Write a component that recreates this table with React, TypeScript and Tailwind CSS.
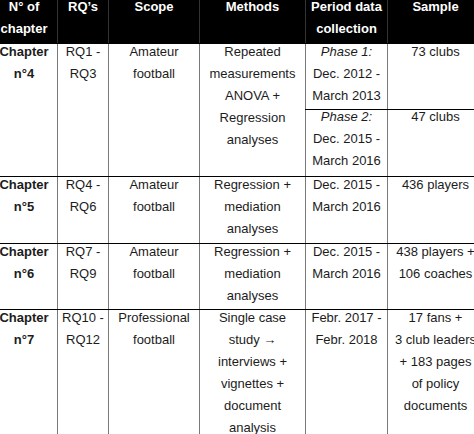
import React from "react";

const V = "border-l border-[#7a7a7a]";
const VH = "border-l border-[#333]";

function Lines({ lines, bold, className = "" }: { lines: React.ReactNode[]; bold?: boolean; className?: string }) {
  return (
    <div className={`-mt-[3px] flex flex-col items-center ${bold ? "font-bold" : ""} ${className}`}>
      {lines.map((l, i) => (
        <div key={i} className="whitespace-nowrap">{l}</div>
      ))}
    </div>
  );
}

type Row = {
  h: string;
  ch: string;
  rq: string[];
  scope: string[];
  methods: string[];
  period: React.ReactNode[];
  sample: string[];
};

const rows: Row[] = [
  {
    h: "h-[67px]",
    ch: "n°5",
    rq: ["RQ4 -", "RQ6"],
    scope: ["Amateur", "football"],
    methods: ["Regression +", "mediation", "analyses"],
    period: ["Dec. 2015 -", "March 2016"],
    sample: ["436 players"],
  },
  {
    h: "h-[66px]",
    ch: "n°6",
    rq: ["RQ7 -", "RQ9"],
    scope: ["Amateur", "football"],
    methods: ["Regression +", "mediation", "analyses"],
    period: ["Dec. 2015 -", "March 2016"],
    sample: ["438 players +", "106 coaches"],
  },
  {
    h: "h-[130px]",
    ch: "n°7",
    rq: ["RQ10 -", "RQ12"],
    scope: ["Professional", "football"],
    methods: ["Single case", "study →", "interviews +", "vignettes +", "document", "analysis"],
    period: ["Febr. 2017 -", "Febr. 2018"],
    sample: ["17 fans +", "3 club leaders", "+ 183 pages", "of policy", "documents"],
  },
];

const cols = "grid grid-cols-[57px_51px_91px_106px_82px_96px]";

export default function App() {
  return (
    <div
      className="w-[474px] h-[434px] overflow-hidden bg-white text-[13px] leading-[22px] text-[#1c1c1c]"
      style={{ fontFamily: '"Liberation Sans", Arial, sans-serif' }}
    >
      <div className="w-[483px]">
        {/* header */}
        <div className={`${cols} h-[43px] bg-black text-white font-bold`}>
          <div className="pr-[9px]">
            <div className="-mt-[4px] flex flex-col items-center">
              <div className="whitespace-nowrap">N° of</div>
              <div className="whitespace-nowrap">chapter</div>
            </div>
          </div>
          <div className={VH}>
            <div className="-mt-[4px] text-center">RQ’s</div>
          </div>
          <div className={VH}>
            <div className="-mt-[4px] text-center">Scope</div>
          </div>
          <div className={VH}>
            <div className="-mt-[4px] text-center">Methods</div>
          </div>
          <div className={VH}>
            <div className="-mt-[4px] flex flex-col items-center">
              <div className="whitespace-nowrap">Period data</div>
              <div className="whitespace-nowrap">collection</div>
            </div>
          </div>
          <div className={VH}>
            <div className="-mt-[4px] text-center">Sample</div>
          </div>
        </div>

        {/* row 1 */}
        <div className={`${cols} h-[133px] border-t border-black`}>
          <div className="pr-[9px]">
            <Lines bold lines={["Chapter", "n°4"]} />
          </div>
          <div className={V}>
            <Lines lines={["RQ1 -", "RQ3"]} />
          </div>
          <div className={V}>
            <Lines lines={["Amateur", "football"]} />
          </div>
          <div className={V}>
            <Lines lines={["Repeated", "measurements", "ANOVA +", "Regression", "analyses"]} />
          </div>
          <div className="col-span-2 flex flex-col">
            <div className="grid grid-cols-[82px_96px] h-[65px]">
              <div className={V}>
                <Lines lines={[<i key="p">Phase 1:</i>, "Dec. 2012 -", "March 2013"]} />
              </div>
              <div className={V}>
                <Lines lines={["73 clubs"]} />
              </div>
            </div>
            <div className="grid grid-cols-[82px_96px] flex-1 border-t border-black">
              <div className={V}>
                <div className="-mt-[4px] flex flex-col items-center">
                  <div className="whitespace-nowrap"><i>Phase 2:</i></div>
                  <div className="whitespace-nowrap">Dec. 2015 -</div>
                  <div className="whitespace-nowrap">March 2016</div>
                </div>
              </div>
              <div className={V}>
                <div className="-mt-[4px] text-center">47 clubs</div>
              </div>
            </div>
          </div>
        </div>

        {rows.map((r, i) => (
          <div key={i} className={`${cols} ${r.h} border-t border-black`}>
            <div className="pr-[9px]">
              <Lines bold lines={["Chapter", r.ch]} />
            </div>
            <div className={V}>
              <Lines lines={r.rq} />
            </div>
            <div className={V}>
              <Lines lines={r.scope} />
            </div>
            <div className={V}>
              <Lines lines={r.methods} />
            </div>
            <div className={V}>
              <Lines lines={r.period} />
            </div>
            <div className={V}>
              <Lines lines={r.sample} />
            </div>
          </div>
        ))}
      </div>
    </div>
  );
}
